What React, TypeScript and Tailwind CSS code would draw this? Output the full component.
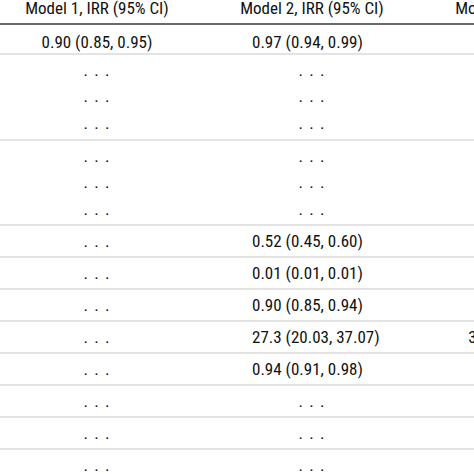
import React from "react";

type Cell = string | null; // null = dots

const FONT: React.CSSProperties = {
  fontFamily: 'Roboto, "Open Sans", sans-serif',
  fontStretch: "75%",
};

function Dots() {
  return <span className="tracking-[1.2px]">. . .</span>;
}

function C1({ v }: { v: Cell }) {
  return <div className="text-center whitespace-nowrap">{v === null ? <Dots /> : v}</div>;
}
function C2({ v }: { v: Cell }) {
  return v === null ? (
    <div className="text-center">
      <Dots />
    </div>
  ) : (
    <div className="pl-[58px] whitespace-nowrap">{v}</div>
  );
}
function C3({ v }: { v: Cell }) {
  return (
    <div className="text-center whitespace-nowrap pl-[10px]">{v === null ? <Dots /> : v}</div>
  );
}

const GRID = "grid grid-cols-[194px_236px_194px]";

function SubRow({ a, b, c }: { a: Cell; b: Cell; c: Cell }) {
  return (
    <div className={`${GRID} h-[26.5px] leading-[27px]`}>
      <C1 v={a} />
      <C2 v={b} />
      <C3 v={c} />
    </div>
  );
}

function Row({ a, b, c }: { a: Cell; b: Cell; c: Cell }) {
  return (
    <div className={`${GRID} h-[32px] leading-[30px] border-b-2 border-[#e3e3e3]`}>
      <C1 v={a} />
      <C2 v={b} />
      <C3 v={c} />
    </div>
  );
}

export default function App() {
  const singles: [Cell, Cell, Cell][] = [
    [null, "0.52 (0.45, 0.60)", "0.53 (0.46, 0.61)"],
    [null, "0.01 (0.01, 0.01)", "0.01 (0.01, 0.01)"],
    [null, "0.90 (0.85, 0.94)", "0.91 (0.86, 0.95)"],
    [null, "27.3 (20.03, 37.07)", "32.6 (23.40, 45.41)"],
    [null, "0.94 (0.91, 0.98)", "0.95 (0.91, 0.98)"],
    [null, null, null],
    [null, null, null],
    [null, null, null],
  ];
  return (
    <div
      className="w-[474px] h-[474px] overflow-hidden bg-white text-[17px] text-[#111111]"
      style={FONT}
    >
      <div className="w-[624px]">
        {/* header */}
        <div className={`${GRID} h-[25px] leading-[17px] border-b-2 border-[#6a6a6a]`}>
          <div className="text-center whitespace-nowrap">Model 1, IRR (95% CI)</div>
          <div className="text-center whitespace-nowrap">Model 2, IRR (95% CI)</div>
          <div className="text-center whitespace-nowrap">Model 3, IRR (95% CI)</div>
        </div>
        {/* first row */}
        <div className={`${GRID} h-[30px] pt-[4px] leading-[27px] border-b-2 border-[#e3e3e3]`}>
          <C1 v="0.90 (0.85, 0.95)" />
          <C2 v="0.97 (0.94, 0.99)" />
          <C3 v="0.98 (0.95, 1.00)" />
        </div>
        {/* section 2 */}
        <div className="pt-[1.5px] pb-[3px] border-b-2 border-[#e3e3e3]">
          <SubRow a={null} b={null} c={null} />
          <SubRow a={null} b={null} c={null} />
          <SubRow a={null} b={null} c={null} />
        </div>
        {/* section 3 */}
        <div className="pt-[1.5px] pb-[2px] border-b-2 border-[#e3e3e3]">
          <SubRow a={null} b={null} c={null} />
          <SubRow a={null} b={null} c={null} />
          <SubRow a={null} b={null} c={null} />
        </div>
        {singles.map((r, i) => (
          <Row key={i} a={r[0]} b={r[1]} c={r[2]} />
        ))}
      </div>
    </div>
  );
}
